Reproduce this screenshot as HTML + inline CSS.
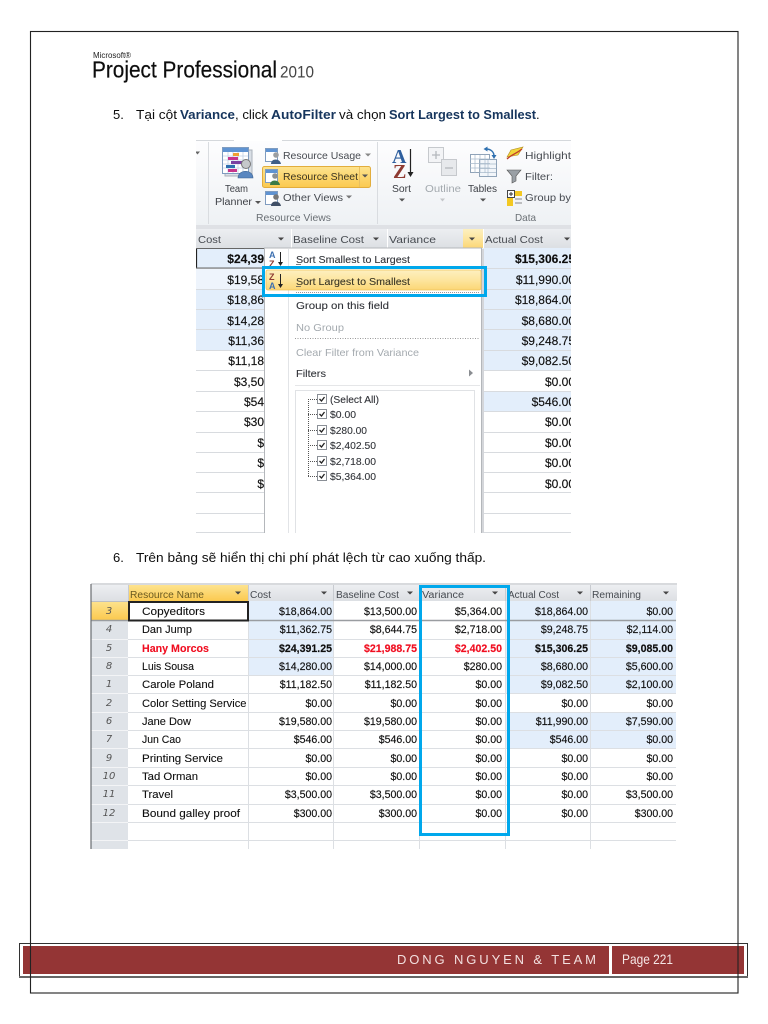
<!DOCTYPE html>
<html><head><meta charset="utf-8"><title>Project Professional 2010</title>
<style>
html,body{margin:0;padding:0;background:#fff;width:768px;height:1024px;overflow:hidden}
svg{display:block}
text{font-family:"Liberation Sans","DejaVu Sans",sans-serif;white-space:pre}
.b{font-size:13px;fill:#111}
.n{font-size:13px;fill:#17365d;font-weight:bold}
.h{font-size:10.5px;fill:#474b51}
.r{font-size:10px;fill:#3c3f45}
.g{font-size:10.5px;fill:#a4aaaf}
.m{font-size:10.5px;fill:#303338;stroke:#303338;stroke-width:.1}
.v{font-size:12px;fill:#111;text-anchor:end;stroke:#111;stroke-width:.15}
.t{font-size:10.6px;fill:#111;text-anchor:end;stroke:#111;stroke-width:.15}
.nm{font-size:11px;fill:#111;stroke:#111;stroke-width:.1}
.rn{font-size:10px;fill:#555;font-style:italic;text-anchor:middle;font-family:"DejaVu Sans",sans-serif}
.sf{font-family:"Liberation Serif",serif;font-weight:bold}
.bd{font-weight:bold}
.red{fill:#f01020;stroke:#f01020}
</style></head><body>
<svg width="768" height="1024" viewBox="0 0 768 1024" xmlns="http://www.w3.org/2000/svg">
<defs>
<filter id="s" x="-2%" y="-2%" width="104%" height="104%"><feGaussianBlur stdDeviation="0.32"/></filter>
<filter id="l" x="-2%" y="-2%" width="104%" height="104%"><feGaussianBlur stdDeviation="0.2"/></filter>
<linearGradient id="gold" x1="0" y1="0" x2="0" y2="1"><stop offset="0" stop-color="#fdf0c0"/><stop offset=".5" stop-color="#fde59f"/><stop offset="1" stop-color="#fbd675"/></linearGradient>
<linearGradient id="gold2" x1="0" y1="0" x2="0" y2="1"><stop offset="0" stop-color="#fde38f"/><stop offset="1" stop-color="#fbc94f"/></linearGradient>
<linearGradient id="hd" x1="0" y1="0" x2="0" y2="1"><stop offset="0" stop-color="#eceef1"/><stop offset="1" stop-color="#dcdfe3"/></linearGradient>
<linearGradient id="rib" x1="0" y1="0" x2="0" y2="1"><stop offset="0" stop-color="#fdfdfe"/><stop offset="1" stop-color="#eef1f4"/></linearGradient>
<clipPath id="c1"><rect x="196" y="140" width="375" height="393"/></clipPath>
<clipPath id="c2"><rect x="128" y="601" width="118" height="240"/></clipPath>
</defs>

<!-- logo and instructions -->
<g filter="url(#l)">
<text x="93" y="58" fill="#222" textLength="38" lengthAdjust="spacingAndGlyphs" style="font-size:8.500px">Microsoft®</text>
<text x="92" y="77.500" fill="#111" textLength="185" lengthAdjust="spacingAndGlyphs" style="font-size:23px;stroke:#111;stroke-width:.2">Project Professional</text>
<text x="280" y="77.500" fill="#444" textLength="34" lengthAdjust="spacingAndGlyphs" style="font-size:17px">2010</text>
<text class="b" x="113" y="119">5.</text>
<text class="b" x="136" y="119" textLength="41" lengthAdjust="spacingAndGlyphs">Tại cột</text>
<text class="n" x="180" y="119" textLength="55" lengthAdjust="spacingAndGlyphs">Variance</text>
<text class="b" x="235" y="119" textLength="33" lengthAdjust="spacingAndGlyphs">, click</text>
<text class="n" x="271" y="119" textLength="65" lengthAdjust="spacingAndGlyphs">AutoFilter</text>
<text class="b" x="339" y="119" textLength="47" lengthAdjust="spacingAndGlyphs">và chọn</text>
<text class="n" x="389" y="119" textLength="147" lengthAdjust="spacingAndGlyphs">Sort Largest to Smallest</text>
<text class="b" x="536" y="119">.</text>
<text class="b" x="113" y="562">6.</text>
<text class="b" x="136" y="562" textLength="350" lengthAdjust="spacingAndGlyphs">Trên bảng sẽ hiển thị chi phí phát lệch từ cao xuống thấp.</text>
</g>

<!-- first screenshot -->
<g filter="url(#s)" clip-path="url(#c1)">
<rect x="196" y="140" width="375" height="393" fill="#fff"/>
<rect x="196" y="141" width="375" height="85" fill="url(#rib)"/>
<path d="M196 140.500H234M282 140.500H571" stroke="#d5d8dc"/>
<path d="M208.500 142V224M377.500 142V224" stroke="#d9dce0"/>
<rect x="196" y="225" width="375" height="4" fill="#dfe1e5"/>
<path d="M195 151.500h5l-2.500 3z" fill="#666"/>

<!-- team planner icon -->
<rect x="225" y="150" width="27" height="26" fill="#d9dfe6" stroke="#aab2bb"/>
<rect x="222.500" y="147.500" width="26" height="26" fill="#fff" stroke="#7f9cc0"/>
<rect x="223" y="148" width="25" height="4" fill="#5f93d2"/>
<path d="M228 152v21M233 152v21M238 152v21M243 152v21M223 156h25M223 160h25M223 164h25M223 168h25" stroke="#c2d2e6" stroke-width=".8"/>
<rect x="228" y="157" width="10" height="3" fill="#c7348c"/><rect x="231" y="161" width="11" height="3" fill="#7a3fa2"/><rect x="226" y="165" width="9" height="3" fill="#2e6fb0"/><rect x="233" y="153" width="6" height="3" fill="#f0a030"/><rect x="228" y="169" width="9" height="3" fill="#c7348c"/>
<circle cx="246" cy="164" r="4.500" fill="#c5c8cb" stroke="#777"/>
<path d="M238 178c0-9 15-9 15 0z" fill="#5a87c0" stroke="#3c628f" stroke-width=".6"/>
<text class="r" x="225" y="192" textLength="23" lengthAdjust="spacingAndGlyphs">Team</text>
<text class="r" x="215" y="205" textLength="37" lengthAdjust="spacingAndGlyphs">Planner</text>
<path d="M255 201h6l-3 3z" fill="#555"/>

<!-- view list -->
<rect x="262.500" y="166.500" width="108" height="21" rx="2" fill="url(#gold2)" stroke="#e2ad3c"/>
<path d="M359.500 167v20" stroke="#e8bf60"/>
<path d="M362 174.500h6l-3 3z" fill="#555"/>
<rect x="265.500" y="148.500" width="12" height="13" fill="#fff" stroke="#7f9cc0"/><rect x="266" y="149" width="11" height="3" fill="#5f93d2"/>
<circle cx="276" cy="155" r="2.800" fill="#9b9ea1"/><path d="M271 164c0-6 9-6 10 0z" fill="#3f5f86"/>
<rect x="265.500" y="169.500" width="12" height="13" fill="#fff" stroke="#7f9cc0"/><rect x="266" y="170" width="11" height="3" fill="#5f93d2"/>
<circle cx="275" cy="176" r="2.800" fill="#8c8f92"/><path d="M270 185c0-6 9-6 10 0z" fill="#3b7a45"/>
<rect x="265.500" y="191.500" width="12" height="13" fill="#fff" stroke="#7f9cc0"/><rect x="266" y="192" width="11" height="3" fill="#5f93d2"/>
<circle cx="276" cy="197" r="2.800" fill="#777"/><path d="M271 206c0-6 9-6 10 0z" fill="#3f4f66"/>
<text class="h" x="283" y="159" textLength="78" lengthAdjust="spacingAndGlyphs">Resource Usage</text>
<path d="M365 153.500h6l-3 3z" fill="#888"/>
<text class="h" x="283" y="180" textLength="75" lengthAdjust="spacingAndGlyphs" style="fill:#3a3520">Resource Sheet</text>
<text class="h" x="283" y="201" textLength="60" lengthAdjust="spacingAndGlyphs">Other Views</text>
<path d="M346 195.500h6l-3 3z" fill="#777"/>
<text x="256" y="221" fill="#6a6f75" textLength="75" lengthAdjust="spacingAndGlyphs" style="font-size:10.500px">Resource Views</text>

<!-- sort / outline / tables -->
<text class="sf" x="392" y="163" style="font-size:20px;fill:#2f5f9e">A</text>
<text class="sf" x="393" y="178" style="font-size:20px;fill:#8e3a32">Z</text>
<path d="M410.500 149v25" stroke="#222" stroke-width="1.200"/><path d="M407.500 172h6l-3 5z" fill="#222"/>
<text class="r" x="392" y="192" textLength="19" lengthAdjust="spacingAndGlyphs">Sort</text>
<path d="M399 198.500h6l-3 3z" fill="#555"/>
<rect x="428.500" y="147.500" width="15" height="15" fill="#f3f4f6" stroke="#c6c9cd"/><path d="M432 155h8M436 151v8" stroke="#b4b8bd" stroke-width="1.300"/>
<rect x="441.500" y="159.500" width="15" height="16" fill="#e7e9ec" stroke="#c6c9cd"/><path d="M445 168h8" stroke="#b4b8bd" stroke-width="1.300"/>
<text class="g" x="425" y="192" textLength="36" lengthAdjust="spacingAndGlyphs">Outline</text>
<path d="M440 198.500h5l-2.500 3z" fill="#c4c6c9"/>
<rect x="470.500" y="154.500" width="19" height="18" fill="#fff" stroke="#8fa3b8"/>
<rect x="479.500" y="159.500" width="17" height="17" fill="#f2f6fa" stroke="#8fa3b8"/>
<path d="M470 159h20M470 163.500h20M470 168h20M475 155v18M480 155v18M485 155v18M480 164h16M480 168.500h16M480 172.500h16M488 160v16" stroke="#a9bacb" stroke-width=".7"/>
<path d="M486 149c5 0 8 3 8 7" fill="none" stroke="#2e6fb0" stroke-width="1.400"/><path d="M483.500 149l4-2.500v5zM491.500 155h5l-2.500 4z" fill="#2e6fb0"/>
<text class="r" x="468" y="192" textLength="29" lengthAdjust="spacingAndGlyphs">Tables</text>
<path d="M480 198.500h6l-3 3z" fill="#555"/>

<!-- highlight etc -->
<path d="M507 157l4-7 12-3-5 8z" fill="#f1d63a" stroke="#b08a20" stroke-width=".6"/>
<path d="M507 159c5-5 9-5 15-10" fill="none" stroke="#c03a2a" stroke-width="1.300"/>
<text class="h" x="525" y="159" textLength="46" lengthAdjust="spacingAndGlyphs">Highlight</text>
<path d="M507 170h14l-5 6v5l-4 2v-7z" fill="#9aa0a6" stroke="#555" stroke-width=".6"/>
<text class="h" x="525" y="180" textLength="28" lengthAdjust="spacingAndGlyphs">Filter:</text>
<rect x="507" y="197" width="6" height="9" fill="#f3c820"/><rect x="513" y="191" width="9" height="5" fill="#f3c820"/>
<rect x="507.500" y="190.500" width="7" height="7" fill="#fff" stroke="#444"/><path d="M509 194h4M511 192v4" stroke="#333"/>
<path d="M515 199h7M515 203h7" stroke="#888"/>
<text class="h" x="525" y="201" textLength="46" lengthAdjust="spacingAndGlyphs">Group by</text>
<text x="515" y="221" fill="#6a6f75" textLength="21" lengthAdjust="spacingAndGlyphs" style="font-size:10.500px">Data</text>

<!-- grid header -->
<rect x="196" y="229" width="375" height="19" fill="url(#hd)"/>
<path d="M291.500 229v19M387.500 229v19M483.500 229v19" stroke="#fff"/>
<rect x="463" y="229" width="20" height="19" fill="url(#gold)"/>
<text class="h" x="198" y="243" textLength="23" lengthAdjust="spacingAndGlyphs">Cost</text>
<text class="h" x="293" y="243" textLength="71" lengthAdjust="spacingAndGlyphs">Baseline Cost</text>
<text class="h" x="389" y="243" textLength="47" lengthAdjust="spacingAndGlyphs">Variance</text>
<text class="h" x="485" y="243" textLength="58" lengthAdjust="spacingAndGlyphs">Actual Cost</text>
<path d="M278 237.500h6l-3 3zM373 237.500h6l-3 3zM469 237.500h6l-3 3zM564 237.500h6l-3 3z" fill="#444"/>

<!-- rows -->
<g fill="#e3eefb">
<rect x="196" y="248" width="68" height="20"/><rect x="196" y="268" width="68" height="21" fill="#eef4fc"/><rect x="196" y="289" width="68" height="61"/>
<rect x="482" y="248" width="89" height="123"/><rect x="482" y="391" width="89" height="20"/>
</g>
<path d="M196 268.500H571M196 289.500H571M196 309.500H571M196 329.500H571M196 350.500H571M196 370.500H571M196 391.500H571M196 411.500H571M196 432.500H571M196 452.500H571M196 472.500H571M196 492.500H571M196 513.500H571M196 532.500H571" stroke="#d8dbdf"/>
<path d="M196.500 248V268" stroke="#222" stroke-width="1.200"/>
<path d="M196 248.500H264M196 268H264" stroke="#666"/>
<text class="v bd" x="264" y="263">$24,39</text><text class="v" x="264" y="284">$19,58</text><text class="v" x="264" y="304">$18,86</text><text class="v" x="264" y="325">$14,28</text><text class="v" x="264" y="345">$11,36</text><text class="v" x="264" y="365">$11,18</text><text class="v" x="264" y="386">$3,50</text><text class="v" x="264" y="406">$54</text><text class="v" x="264" y="426">$30</text><text class="v" x="264" y="447">$</text><text class="v" x="264" y="467">$</text><text class="v" x="264" y="488">$</text>
<text class="v bd" x="575" y="263">$15,306.25</text><text class="v" x="575" y="284">$11,990.00</text><text class="v" x="575" y="304">$18,864.00</text><text class="v" x="575" y="325">$8,680.00</text><text class="v" x="575" y="345">$9,248.75</text><text class="v" x="575" y="365">$9,082.50</text><text class="v" x="575" y="386">$0.00</text><text class="v" x="575" y="406">$546.00</text><text class="v" x="575" y="426">$0.00</text><text class="v" x="575" y="447">$0.00</text><text class="v" x="575" y="467">$0.00</text><text class="v" x="575" y="488">$0.00</text>

<!-- menu -->
<rect x="482" y="249" width="2" height="284" fill="#d4d6da"/>
<rect x="264.500" y="248" width="217" height="290" fill="#fff" stroke="#b4b7bb"/>
<path d="M288.500 249V533" stroke="#e2e4e7"/>
<rect x="266" y="270" width="215" height="20" rx="2" fill="url(#gold)" stroke="#eec25c" stroke-width=".8"/>
<text x="269" y="258" style="font-size:9px;font-weight:bold;fill:#3e6fb0">A</text><text x="269" y="267" style="font-size:9px;font-weight:bold;fill:#8e3a32">Z</text>
<path d="M280.500 252v12" stroke="#222"/><path d="M278 262h5l-2.500 4z" fill="#222"/>
<text x="269" y="280" style="font-size:9px;font-weight:bold;fill:#8e3a32">Z</text><text x="269" y="289" style="font-size:9px;font-weight:bold;fill:#3e6fb0">A</text>
<path d="M280.500 274v12" stroke="#222"/><path d="M278 284h5l-2.500 4z" fill="#222"/>
<text class="m" x="296" y="263" textLength="114" lengthAdjust="spacingAndGlyphs">Sort Smallest to Largest</text>
<text class="m" x="296" y="285" textLength="114" lengthAdjust="spacingAndGlyphs" style="fill:#3a3520">Sort Largest to Smallest</text>
<path d="M296 264.500h5M296 286.500h5" stroke="#555" stroke-width=".7"/>
<path d="M296 292.500H480" stroke="#999" stroke-dasharray="1 1"/>
<text class="m" x="296" y="309" textLength="93" lengthAdjust="spacingAndGlyphs">Group on this field</text>
<text class="g" x="296" y="331" textLength="48" lengthAdjust="spacingAndGlyphs">No Group</text>
<path d="M295 338.500H480" stroke="#999" stroke-dasharray="1 1.500"/>
<text class="g" x="296" y="356" textLength="123" lengthAdjust="spacingAndGlyphs">Clear Filter from Variance</text>
<text class="m" x="296" y="377" textLength="30" lengthAdjust="spacingAndGlyphs">Filters</text>
<path d="M469 369.500v7l4-3.500z" fill="#8a8d91"/>
<path d="M295 385.500H480" stroke="#e5e6e8"/>
<path d="M295.500 533V390.500H474.500V533" fill="#fff" stroke="#e0e2e5"/>
<path d="M308.500 399V476.500M308 399.500h9M308 414.500h9M308 430.500h9M308 445.500h9M308 461.500h9M308 476.500h9" fill="none" stroke="#555" stroke-dasharray="1 1"/>
<g fill="#fff" stroke="#8a8f96"><rect x="317.500" y="394.500" width="9" height="9"/><rect x="317.500" y="409.500" width="9" height="9"/><rect x="317.500" y="425.500" width="9" height="9"/><rect x="317.500" y="440.500" width="9" height="9"/><rect x="317.500" y="456.500" width="9" height="9"/><rect x="317.500" y="471.500" width="9" height="9"/></g>
<g fill="none" stroke="#222" stroke-width="1.300"><path d="M319.500 399l2 2 3-4"/><path d="M319.500 414l2 2 3-4"/><path d="M319.500 430l2 2 3-4"/><path d="M319.500 445l2 2 3-4"/><path d="M319.500 461l2 2 3-4"/><path d="M319.500 476l2 2 3-4"/></g>
<text class="m" x="330" y="403" textLength="49" lengthAdjust="spacingAndGlyphs">(Select All)</text>
<text class="m" x="330" y="418" textLength="26" lengthAdjust="spacingAndGlyphs">$0.00</text>
<text class="m" x="330" y="434" textLength="37" lengthAdjust="spacingAndGlyphs">$280.00</text>
<text class="m" x="330" y="449" textLength="46" lengthAdjust="spacingAndGlyphs">$2,402.50</text>
<text class="m" x="330" y="465" textLength="46" lengthAdjust="spacingAndGlyphs">$2,718.00</text>
<text class="m" x="330" y="480" textLength="46" lengthAdjust="spacingAndGlyphs">$5,364.00</text>

<!-- callout -->
<rect x="263.500" y="267.500" width="222" height="28" fill="none" stroke="#00a8ec" stroke-width="3"/>
</g>

<!-- second screenshot -->
<g filter="url(#s)">
<rect x="91" y="583" width="586" height="2" fill="#d8dadd"/>
<rect x="91" y="585" width="586" height="16" fill="url(#hd)"/>
<rect x="91" y="601" width="37" height="248" fill="#dfe3e8"/>
<rect x="91" y="601" width="37" height="19" fill="url(#gold2)"/>
<rect x="128" y="585" width="120" height="16" fill="url(#gold2)"/>
<path d="M128.500 585v16M248.500 585v16M333.500 585v16M419.500 585v16M505.500 585v16M590.500 585v16" stroke="#c8cbd0"/>
<g fill="#e3eefb">
<rect x="249" y="601" width="84" height="74"/>
<rect x="505" y="601" width="171" height="92"/>
<rect x="505" y="712" width="171" height="36"/>
</g>
<path d="M91 639.500H676M91 657.500H676M91 675.500H676M91 693.500H676M91 712.500H676M91 730.500H676M91 748.500H676M91 767.500H676M91 785.500H676M91 804.500H676M91 822.500H676M91 840.500H676M248.500 601V849M333.500 601V849M419.500 601V849M505.500 601V849M590.500 601V849" stroke="#dcdfe3"/>
<path d="M91 620.500H676" stroke="#9a9da1" stroke-width="1.500"/>
<path d="M91 601.500H128" stroke="#bdbfc2"/>
<path d="M91 748.500H128M91 767.500H128M91 785.500H128M91 804.500H128M91 822.500H128M91 840.500H128M91 639.500H128M91 657.500H128M91 675.500H128M91 693.500H128M91 712.500H128M91 730.500H128" stroke="#f3f4f6"/>
<path d="M91 584V849" stroke="#6a6d70" stroke-width="1.200"/>
<rect x="129" y="602" width="119" height="18.500" fill="#fff" stroke="#222" stroke-width="2"/>

<text class="h" x="130" y="598" textLength="74" lengthAdjust="spacingAndGlyphs" style="font-size:10px;fill:#6a5a20">Resource Name</text>
<text class="h" x="250" y="598" textLength="21" lengthAdjust="spacingAndGlyphs" style="font-size:10px">Cost</text>
<text class="h" x="336" y="598" textLength="63" lengthAdjust="spacingAndGlyphs" style="font-size:10px">Baseline Cost</text>
<text class="h" x="422" y="598" textLength="42" lengthAdjust="spacingAndGlyphs" style="font-size:10px">Variance</text>
<text class="h" x="508" y="598" textLength="51" lengthAdjust="spacingAndGlyphs" style="font-size:10px">Actual Cost</text>
<text class="h" x="592" y="598" textLength="49" lengthAdjust="spacingAndGlyphs" style="font-size:10px">Remaining</text>
<path d="M235 591.500h6l-3 3zM321 591.500h6l-3 3zM407 591.500h6l-3 3zM492 591.500h6l-3 3zM577 591.500h6l-3 3zM663 591.500h6l-3 3z" fill="#444"/>

<text class="rn" x="109" y="614">3</text><text class="rn" x="109" y="632">4</text><text class="rn" x="109" y="651">5</text><text class="rn" x="109" y="669">8</text><text class="rn" x="109" y="687">1</text><text class="rn" x="109" y="706">2</text><text class="rn" x="109" y="724">6</text><text class="rn" x="109" y="742">7</text><text class="rn" x="109" y="761">9</text><text class="rn" x="109" y="779">10</text><text class="rn" x="109" y="797">11</text><text class="rn" x="109" y="816">12</text>

<text class="nm" x="142" y="615" textLength="63" lengthAdjust="spacingAndGlyphs">Copyeditors</text>
<text class="nm" x="142" y="633" textLength="50" lengthAdjust="spacingAndGlyphs">Dan Jump</text>
<text class="nm red bd" x="142" y="652" textLength="67" lengthAdjust="spacingAndGlyphs">Hany Morcos</text>
<text class="nm" x="142" y="670" textLength="52" lengthAdjust="spacingAndGlyphs">Luis Sousa</text>
<text class="nm" x="142" y="688" textLength="72" lengthAdjust="spacingAndGlyphs">Carole Poland</text>
<g clip-path="url(#c2)"><text class="nm" x="142" y="707" textLength="110" lengthAdjust="spacingAndGlyphs">Color Setting Services</text></g>
<text class="nm" x="142" y="725" textLength="49" lengthAdjust="spacingAndGlyphs">Jane Dow</text>
<text class="nm" x="142" y="743" textLength="39" lengthAdjust="spacingAndGlyphs">Jun Cao</text>
<text class="nm" x="142" y="762" textLength="81" lengthAdjust="spacingAndGlyphs">Printing Service</text>
<text class="nm" x="142" y="780" textLength="56" lengthAdjust="spacingAndGlyphs">Tad Orman</text>
<text class="nm" x="142" y="798" textLength="31" lengthAdjust="spacingAndGlyphs">Travel</text>
<text class="nm" x="142" y="817" textLength="98" lengthAdjust="spacingAndGlyphs">Bound galley proof</text>

<text class="t" x="332" y="615">$18,864.00</text><text class="t" x="332" y="633">$11,362.75</text><text class="t bd" x="332" y="652">$24,391.25</text><text class="t" x="332" y="670">$14,280.00</text><text class="t" x="332" y="688">$11,182.50</text><text class="t" x="332" y="707">$0.00</text><text class="t" x="332" y="725">$19,580.00</text><text class="t" x="332" y="743">$546.00</text><text class="t" x="332" y="762">$0.00</text><text class="t" x="332" y="780">$0.00</text><text class="t" x="332" y="798">$3,500.00</text><text class="t" x="332" y="817">$300.00</text>

<text class="t" x="417" y="615">$13,500.00</text><text class="t" x="417" y="633">$8,644.75</text><text class="t bd red" x="417" y="652">$21,988.75</text><text class="t" x="417" y="670">$14,000.00</text><text class="t" x="417" y="688">$11,182.50</text><text class="t" x="417" y="707">$0.00</text><text class="t" x="417" y="725">$19,580.00</text><text class="t" x="417" y="743">$546.00</text><text class="t" x="417" y="762">$0.00</text><text class="t" x="417" y="780">$0.00</text><text class="t" x="417" y="798">$3,500.00</text><text class="t" x="417" y="817">$300.00</text>

<text class="t" x="502" y="615">$5,364.00</text><text class="t" x="502" y="633">$2,718.00</text><text class="t bd red" x="502" y="652">$2,402.50</text><text class="t" x="502" y="670">$280.00</text><text class="t" x="502" y="688">$0.00</text><text class="t" x="502" y="707">$0.00</text><text class="t" x="502" y="725">$0.00</text><text class="t" x="502" y="743">$0.00</text><text class="t" x="502" y="762">$0.00</text><text class="t" x="502" y="780">$0.00</text><text class="t" x="502" y="798">$0.00</text><text class="t" x="502" y="817">$0.00</text>

<text class="t" x="588" y="615">$18,864.00</text><text class="t" x="588" y="633">$9,248.75</text><text class="t bd" x="588" y="652">$15,306.25</text><text class="t" x="588" y="670">$8,680.00</text><text class="t" x="588" y="688">$9,082.50</text><text class="t" x="588" y="707">$0.00</text><text class="t" x="588" y="725">$11,990.00</text><text class="t" x="588" y="743">$546.00</text><text class="t" x="588" y="762">$0.00</text><text class="t" x="588" y="780">$0.00</text><text class="t" x="588" y="798">$0.00</text><text class="t" x="588" y="817">$0.00</text>

<text class="t" x="673" y="615">$0.00</text><text class="t" x="673" y="633">$2,114.00</text><text class="t bd" x="673" y="652">$9,085.00</text><text class="t" x="673" y="670">$5,600.00</text><text class="t" x="673" y="688">$2,100.00</text><text class="t" x="673" y="707">$0.00</text><text class="t" x="673" y="725">$7,590.00</text><text class="t" x="673" y="743">$0.00</text><text class="t" x="673" y="762">$0.00</text><text class="t" x="673" y="780">$0.00</text><text class="t" x="673" y="798">$3,500.00</text><text class="t" x="673" y="817">$300.00</text>

<rect x="420.500" y="586.500" width="88" height="248" fill="none" stroke="#00a8ec" stroke-width="3"/>
</g>

<!-- footer -->
<g filter="url(#l)">
<rect x="23" y="946" width="586" height="28" fill="#943634"/>
<rect x="612" y="946" width="132" height="28" fill="#943634"/>
<path d="M19.500 977V943.500H747.500V977" fill="none" stroke="#333"/>
<path d="M19 977H748" stroke="#666" stroke-width="2"/>
<text x="397" y="964" fill="#f2dfdf" textLength="199" style="font-size:13px">DONG NGUYEN &amp; TEAM</text>
<text x="622" y="964" fill="#f5e6e6" textLength="51" lengthAdjust="spacingAndGlyphs" style="font-size:14px">Page 221</text>
<rect x="30.500" y="31.500" width="707.500" height="961.500" fill="none" stroke="#222" stroke-width="1.100"/>
</g>
</svg>
</body></html>
